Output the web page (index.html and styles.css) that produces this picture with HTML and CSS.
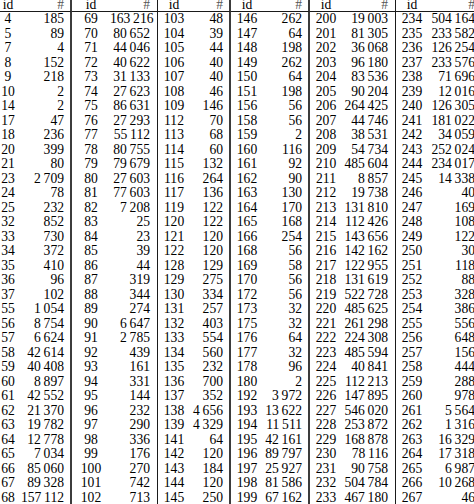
FILE: index.html
```html
<!DOCTYPE html>
<html>
<head>
<meta charset="utf-8">
<link rel="stylesheet" href="styles.css">
</head>
<body>
<div class="tbl">
<span class="h">id</span><span class="h">#</span><span class="h">id</span><span class="h">#</span><span class="h">id</span><span class="h">#</span><span class="h">id</span><span class="h">#</span><span class="h">id</span><span class="h">#</span><span class="h">id</span><span class="h">#</span>
<span>4</span><span>185</span><span>69</span><span>163&thinsp;216</span><span>103</span><span>48</span><span>146</span><span>262</span><span>200</span><span>19&thinsp;003</span><span>234</span><span>504&thinsp;164</span>
<span>5</span><span>89</span><span>70</span><span>80&thinsp;652</span><span>104</span><span>39</span><span>147</span><span>64</span><span>201</span><span>81&thinsp;305</span><span>235</span><span>233&thinsp;582</span>
<span>7</span><span>4</span><span>71</span><span>44&thinsp;046</span><span>105</span><span>44</span><span>148</span><span>198</span><span>202</span><span>36&thinsp;068</span><span>236</span><span>126&thinsp;254</span>
<span>8</span><span>152</span><span>72</span><span>40&thinsp;622</span><span>106</span><span>40</span><span>149</span><span>262</span><span>203</span><span>96&thinsp;180</span><span>237</span><span>233&thinsp;576</span>
<span>9</span><span>218</span><span>73</span><span>31&thinsp;133</span><span>107</span><span>40</span><span>150</span><span>64</span><span>204</span><span>83&thinsp;536</span><span>238</span><span>71&thinsp;696</span>
<span>10</span><span>2</span><span>74</span><span>27&thinsp;623</span><span>108</span><span>46</span><span>151</span><span>198</span><span>205</span><span>90&thinsp;204</span><span>239</span><span>12&thinsp;016</span>
<span>14</span><span>2</span><span>75</span><span>86&thinsp;631</span><span>109</span><span>146</span><span>156</span><span>56</span><span>206</span><span>264&thinsp;425</span><span>240</span><span>126&thinsp;305</span>
<span>17</span><span>47</span><span>76</span><span>27&thinsp;293</span><span>112</span><span>70</span><span>158</span><span>56</span><span>207</span><span>44&thinsp;746</span><span>241</span><span>181&thinsp;022</span>
<span>18</span><span>236</span><span>77</span><span>55&thinsp;112</span><span>113</span><span>68</span><span>159</span><span>2</span><span>208</span><span>38&thinsp;531</span><span>242</span><span>34&thinsp;059</span>
<span>20</span><span>399</span><span>78</span><span>80&thinsp;755</span><span>114</span><span>60</span><span>160</span><span>116</span><span>209</span><span>54&thinsp;734</span><span>243</span><span>252&thinsp;024</span>
<span>21</span><span>80</span><span>79</span><span>79&thinsp;679</span><span>115</span><span>132</span><span>161</span><span>92</span><span>210</span><span>485&thinsp;604</span><span>244</span><span>234&thinsp;017</span>
<span>23</span><span>2&thinsp;709</span><span>80</span><span>27&thinsp;603</span><span>116</span><span>264</span><span>162</span><span>90</span><span>211</span><span>8&thinsp;857</span><span>245</span><span>14&thinsp;338</span>
<span>24</span><span>78</span><span>81</span><span>77&thinsp;603</span><span>117</span><span>136</span><span>163</span><span>130</span><span>212</span><span>19&thinsp;738</span><span>246</span><span>40</span>
<span>25</span><span>232</span><span>82</span><span>7&thinsp;208</span><span>119</span><span>122</span><span>164</span><span>170</span><span>213</span><span>131&thinsp;810</span><span>247</span><span>169</span>
<span>32</span><span>852</span><span>83</span><span>25</span><span>120</span><span>122</span><span>165</span><span>168</span><span>214</span><span>112&thinsp;426</span><span>248</span><span>108</span>
<span>33</span><span>730</span><span>84</span><span>23</span><span>121</span><span>120</span><span>166</span><span>254</span><span>215</span><span>143&thinsp;656</span><span>249</span><span>122</span>
<span>34</span><span>372</span><span>85</span><span>39</span><span>122</span><span>120</span><span>168</span><span>56</span><span>216</span><span>142&thinsp;162</span><span>250</span><span>30</span>
<span>35</span><span>410</span><span>86</span><span>44</span><span>128</span><span>129</span><span>169</span><span>58</span><span>217</span><span>122&thinsp;955</span><span>251</span><span>118</span>
<span>36</span><span>96</span><span>87</span><span>319</span><span>129</span><span>275</span><span>170</span><span>56</span><span>218</span><span>131&thinsp;619</span><span>252</span><span>88</span>
<span>37</span><span>102</span><span>88</span><span>344</span><span>130</span><span>334</span><span>172</span><span>56</span><span>219</span><span>522&thinsp;728</span><span>253</span><span>328</span>
<span>55</span><span>1&thinsp;054</span><span>89</span><span>274</span><span>131</span><span>257</span><span>173</span><span>32</span><span>220</span><span>485&thinsp;625</span><span>254</span><span>386</span>
<span>56</span><span>8&thinsp;754</span><span>90</span><span>6&thinsp;647</span><span>132</span><span>403</span><span>175</span><span>32</span><span>221</span><span>261&thinsp;298</span><span>255</span><span>556</span>
<span>57</span><span>6&thinsp;624</span><span>91</span><span>2&thinsp;785</span><span>133</span><span>554</span><span>176</span><span>64</span><span>222</span><span>224&thinsp;308</span><span>256</span><span>648</span>
<span>58</span><span>42&thinsp;614</span><span>92</span><span>439</span><span>134</span><span>560</span><span>177</span><span>32</span><span>223</span><span>485&thinsp;594</span><span>257</span><span>156</span>
<span>59</span><span>40&thinsp;408</span><span>93</span><span>161</span><span>135</span><span>232</span><span>178</span><span>96</span><span>224</span><span>40&thinsp;841</span><span>258</span><span>444</span>
<span>60</span><span>8&thinsp;897</span><span>94</span><span>331</span><span>136</span><span>700</span><span>180</span><span>2</span><span>225</span><span>112&thinsp;213</span><span>259</span><span>288</span>
<span>61</span><span>42&thinsp;552</span><span>95</span><span>144</span><span>137</span><span>352</span><span>192</span><span>3&thinsp;972</span><span>226</span><span>147&thinsp;895</span><span>260</span><span>978</span>
<span>62</span><span>21&thinsp;370</span><span>96</span><span>232</span><span>138</span><span>4&thinsp;656</span><span>193</span><span>13&thinsp;622</span><span>227</span><span>546&thinsp;020</span><span>261</span><span>5&thinsp;564</span>
<span>63</span><span>19&thinsp;782</span><span>97</span><span>290</span><span>139</span><span>4&thinsp;329</span><span>194</span><span>11&thinsp;511</span><span>228</span><span>253&thinsp;872</span><span>262</span><span>1&thinsp;316</span>
<span>64</span><span>12&thinsp;778</span><span>98</span><span>336</span><span>141</span><span>64</span><span>195</span><span>42&thinsp;161</span><span>229</span><span>168&thinsp;878</span><span>263</span><span>16&thinsp;329</span>
<span>65</span><span>7&thinsp;034</span><span>99</span><span>176</span><span>142</span><span>120</span><span>196</span><span>89&thinsp;797</span><span>230</span><span>78&thinsp;116</span><span>264</span><span>17&thinsp;318</span>
<span>66</span><span>85&thinsp;060</span><span>100</span><span>270</span><span>143</span><span>184</span><span>197</span><span>25&thinsp;927</span><span>231</span><span>90&thinsp;758</span><span>265</span><span>6&thinsp;987</span>
<span>67</span><span>89&thinsp;328</span><span>101</span><span>742</span><span>144</span><span>120</span><span>198</span><span>81&thinsp;586</span><span>232</span><span>504&thinsp;784</span><span>266</span><span>10&thinsp;268</span>
<span>68</span><span>157&thinsp;112</span><span>102</span><span>713</span><span>145</span><span>250</span><span>199</span><span>67&thinsp;162</span><span>233</span><span>467&thinsp;180</span><span>267</span><span>46</span>
</div>
</body>
</html>
```
FILE: styles.css
```css
html, body {
  margin: 0;
  padding: 0;
  background: #fff;
  overflow: hidden;
}
.tbl {
  display: grid;
  grid-template-columns: 16px 56px 38px 48px 32px 41px 32px 47px 32px 54px 32px 56px;
  grid-template-rows: 12px;
  grid-auto-rows: 14.5px;
  width: 484px;
  font-family: "Liberation Serif", "Times New Roman", serif;
  font-size: 13.6px;
  line-height: 14.5px;
  color: #000;
}
.tbl > span {
  box-sizing: border-box;
  white-space: nowrap;
  display: block;
}
.tbl > span:nth-child(odd) {
  text-align: center;
}
.tbl > span:nth-child(even) {
  text-align: right;
  padding-right: 6px;
}
.tbl > span:nth-child(12n+2),
.tbl > span:nth-child(12n+6),
.tbl > span:nth-child(12n+8) {
  border-right: 2px solid #3c3c3c;
}
.tbl > span:nth-child(12n+4),
.tbl > span:nth-child(12n+10) {
  border-right: 1px solid #1a1a1a;
  padding-right: 7px;
}
.tbl > span:nth-child(12n) {
  padding-right: 9px;
}
.tbl > .h {
  border-bottom: 1px solid #1a1a1a;
  line-height: 10px;
}
.tbl > .h:nth-child(even) {
  color: #555;
}
```
